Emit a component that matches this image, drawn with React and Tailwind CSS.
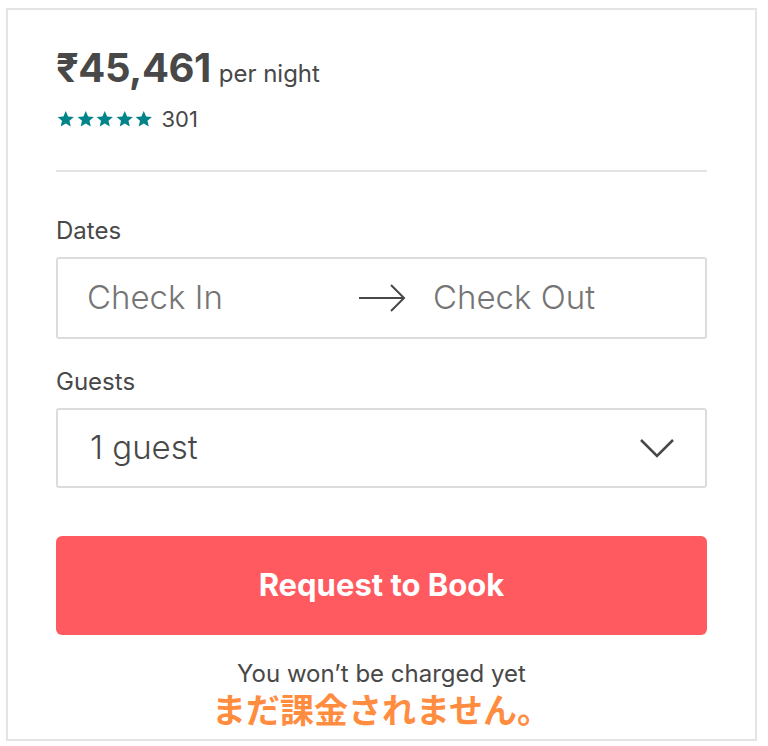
import React from 'react';

const Star = () => (
  <svg viewBox="0 0 24 24" className="w-[19.5px] h-[19.5px] fill-[#008489]">
    <path d="M12 2.5l2.9 6.6 7.1.6-5.4 4.7 1.6 7-6.2-3.7-6.2 3.7 1.6-7L2 9.7l7.1-.6z" />
  </svg>
);

const App = () => {
  return (
    <div
      className="w-[768px] h-[746px] bg-white pl-[6px] pt-[8px]"
      style={{ fontFamily: "Inter, 'Noto Sans CJK JP', sans-serif" }}
    >
      <div className="w-[751px] h-[733px] border-2 border-[#e4e4e4] px-12 pt-[38px] text-[#484848]">
        {/* Price */}
        <div className="flex items-baseline gap-[8px]">
          <span className="text-[40px] font-bold leading-none tracking-[-0.5px]">₹45,461</span>
          <span className="text-[24px] leading-none">per night</span>
        </div>
        <div className="flex items-center gap-[8px] mt-[20px]">
          <div className="flex">
            <Star /><Star /><Star /><Star /><Star />
          </div>
          <span className="text-[22px] leading-none">301</span>
        </div>

        <div className="h-[2px] bg-[#e4e4e4] mt-[40px]" />

        {/* Dates */}
        <div className="mt-[47px] text-[24px] leading-none">Dates</div>
        <div className="mt-[14px] h-[82px] border-2 border-[#dcdcdc] rounded-[3px] flex items-center pl-[29px]">
          <span className="w-[270px] text-[33px] font-light text-[#757575]">Check In</span>
          <svg viewBox="0 0 50 30" className="w-[50px] h-[30px] stroke-[#484848] fill-none">
            <path d="M2 15h45M34 2l13 13-13 13" strokeWidth="2" />
          </svg>
          <span className="ml-[26px] text-[33px] font-light text-[#757575]">Check Out</span>
        </div>

        {/* Guests */}
        <div className="mt-[31px] text-[24px] leading-none">Guests</div>
        <div className="mt-[14px] h-[80px] border-2 border-[#dcdcdc] rounded-[3px] flex items-center justify-between pl-[32px] pr-[30px]">
          <span className="text-[33px] font-light">1 guest</span>
          <svg viewBox="0 0 36 20" className="w-[36px] h-[20px] stroke-[#484848] fill-none">
            <path d="M2 2l16 16L34 2" strokeWidth="2.5" />
          </svg>
        </div>

        {/* Button */}
        <button className="mt-[48px] w-full h-[99px] rounded-[6px] bg-[#ff5a5f] text-white text-[31px] font-bold">
          Request to Book
        </button>

        <div className="mt-[27px] text-center text-[24px] leading-none">You won’t be charged yet</div>
        <div className="mt-[8px] text-center text-[34px] font-bold leading-none text-[#ff8c3f]">
          まだ課金されません。
        </div>
      </div>
    </div>
  );
};

export default App;
